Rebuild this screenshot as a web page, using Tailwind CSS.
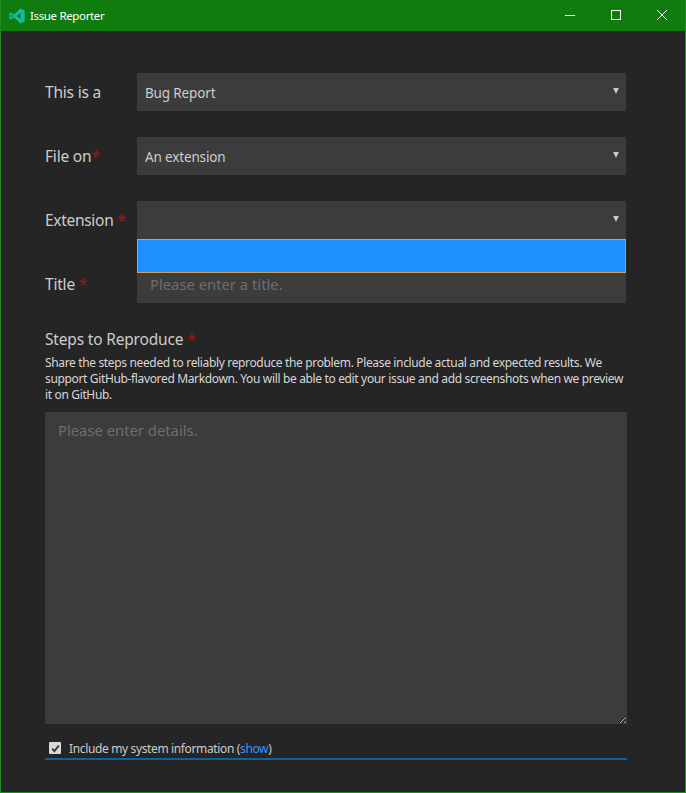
<!DOCTYPE html>
<html lang="en">
<head>
    <meta charset="UTF-8">
    <title>Issue Reporter</title>
    <script src="https://cdn.jsdelivr.net/npm/@tailwindcss/browser@4"></script>
</head>
<body class="bg-[#252526] font-['Noto_Sans','Open_Sans',sans-serif] text-[#cccccc]">
    <div class="w-[686px] h-[793px] flex flex-col border border-[#1f8a1f] border-t-0 overflow-hidden">
        <!-- title bar -->
        <div class="h-[31px] shrink-0 bg-[#107c10] flex items-center text-white">
            <svg class="ml-[8px] w-[16px] h-[16px]" viewBox="0 0 16 16">
                <path fill="#17b8a0" d="M11.5 0.6 15.6 2.5V13.5L11.5 15.4 4.9 9.4 2 11.6 0.4 10.8V5.2L2 4.4 4.9 6.6ZM11.5 4.9 7.6 8 11.5 11.1ZM2 6.2V9.8L3.8 8Z"/>
            </svg>
            <span class="ml-[5px] text-[11.5px] leading-none tracking-[-0.35px]">Issue Reporter</span>
            <div class="ml-auto flex items-start h-full">
                <svg class="w-[46px] h-[30px]" viewBox="0 0 46 30"><path d="M18 15.5H28" stroke="#fff" fill="none"/></svg>
                <svg class="w-[46px] h-[30px]" viewBox="0 0 46 30"><rect x="18.5" y="10.5" width="9" height="9" stroke="#fff" fill="none"/></svg>
                <svg class="w-[46px] h-[30px]" viewBox="0 0 46 30"><path d="M18 10 28 20M28 10 18 20" stroke="#fff" fill="none"/></svg>
            </div>
        </div>

        <div class="pl-[44px] pr-[58px] pt-[42px] flex flex-col">
            <!-- fields -->
            <div class="flex flex-col gap-[26px]">
                <div class="flex items-center">
                    <label class="w-[92px] mt-[2px] text-[15.5px] tracking-[-0.2px]">This is a</label>
                    <div class="w-[489px] h-[38px] bg-[#3c3c3c] flex items-center pl-[8px] pr-[7px] text-[13.5px] tracking-[-0.15px]">
                        <span class="mt-[2px]">Bug Report</span>
                        <span class="ml-auto w-0 h-0 border-x-[3px] border-x-transparent border-t-[6px] border-t-[#c8c8c8] mb-[2px]"></span>
                    </div>
                </div>
                <div class="flex items-center">
                    <label class="w-[92px] mt-[2px] text-[15.5px] tracking-[-0.2px]">File on<span class="text-[#a31515]">*</span></label>
                    <div class="w-[489px] h-[38px] bg-[#3c3c3c] flex items-center pl-[8px] pr-[7px] text-[13.5px] tracking-[-0.15px]">
                        <span class="mt-[2px]">An extension</span>
                        <span class="ml-auto w-0 h-0 border-x-[3px] border-x-transparent border-t-[6px] border-t-[#c8c8c8] mb-[2px]"></span>
                    </div>
                </div>
                <div class="flex items-center">
                    <label class="w-[92px] mt-[2px] text-[15.5px] tracking-[-0.3px]">Extension <span class="text-[#a31515]">*</span></label>
                    <div class="relative w-[489px] h-[38px] bg-[#3c3c3c] flex items-center pl-[8px] pr-[7px]">
                        <span class="ml-auto w-0 h-0 border-x-[3px] border-x-transparent border-t-[6px] border-t-[#c8c8c8] mb-[2px]"></span>
                        <div class="absolute left-0 top-[38px] w-[489px] h-[34px] bg-[#1e90ff] border border-[#d0a050]"></div>
                    </div>
                </div>
                <div class="flex items-center">
                    <label class="w-[92px] mt-[2px] text-[15.5px] tracking-[-0.2px]">Title <span class="text-[#a31515]">*</span></label>
                    <input class="w-[489px] h-[38px] bg-[#3c3c3c] pl-[13px] text-[14.8px] outline-none placeholder:text-[#6e6e6e]" placeholder="Please enter a title.">
                </div>
            </div>

            <!-- steps -->
            <h2 class="mt-[25px] text-[15.5px] tracking-[-0.18px] leading-[22px] font-normal">Steps to Reproduce <span class="text-[#a31515]">*</span></h2>
            <p class="mt-[5px] w-[582px] text-[12px] leading-[16px] tracking-[-0.35px] text-[#d7d7d7]">Share the steps needed to reliably reproduce the problem. Please include actual and expected results. We support GitHub-flavored Markdown. You will be able to edit your issue and add screenshots when we preview it on GitHub.</p>
            <textarea class="mt-[9px] w-[582px] h-[312px] bg-[#3c3c3c] px-[13px] pt-[7px] text-[14.8px] outline-none placeholder:text-[#6e6e6e]" placeholder="Please enter details."></textarea>

            <!-- system info -->
            <div class="w-[582px] mt-[14px] h-[22px] border-b-2 border-[#0e639c] flex items-center text-[12px] tracking-[-0.36px]">
                <span class="ml-[4px] w-[12px] h-[12px] bg-[#d8d8d8] rounded-[1px] flex items-center justify-center">
                    <svg class="w-[9px] h-[9px]" viewBox="0 0 9 9"><path d="M1.2 4.6 3.4 7 7.8 1.6" stroke="#333" stroke-width="1.8" fill="none"/></svg>
                </span>
                <span class="ml-[8px] mt-[2px]">Include my system information (<a class="text-[#3794ff]">show</a>)</span>
            </div>
        </div>
    </div>
</body>
</html>
